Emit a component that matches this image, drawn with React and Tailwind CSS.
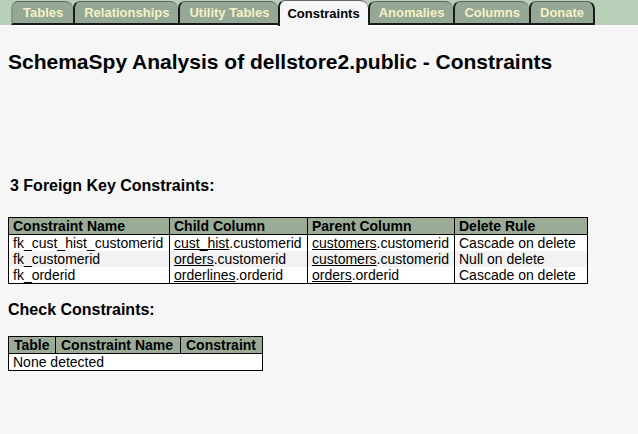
import React from "react";

const tabs = ["Tables", "Relationships", "Utility Tables", "Constraints", "Anomalies", "Columns", "Donate"];

function Tab({ label, active, first, last }) {
  let cls =
    "flex items-center rounded-tl-[7px] rounded-tr-[8px] border-t-[1px] border-t-[#666] border-l-[2px] ";
  cls += first ? "border-l-[#8a9a8a] pl-[10px] pr-[10px] " : "border-l-[#1a1a1a] ";
  if (last) cls += "border-r-[2px] border-r-[#1a1a1a] ";
  if (active) cls += "bg-[#f6f6f6] text-black h-[26px] -mb-[1px] pl-[7px] pr-[8px]";
  else cls += "bg-[#95a895] text-[#f3f1c6] h-[24px] border-b-[2px] border-b-[#1a1a1a]" + (first ? "" : " pl-[9px] pr-[9px]");
  return (
    <div className={cls}>
      <span className="text-[13px] font-bold leading-none">{label}</span>
    </div>
  );
}

const U = ({ children }) => <span className="underline">{children}</span>;

const td = "pl-[4px] pr-[3px] border-x border-black whitespace-nowrap";
const th = "text-left font-bold pl-[4px] pr-[3px] border border-black whitespace-nowrap";

export default function App() {
  return (
    <div
      className="w-[638px] h-[434px] bg-[#f6f6f6] text-black overflow-hidden"
      style={{ fontFamily: '"Liberation Sans", Arial, sans-serif' }}
    >
      <div className="h-[27px] bg-[#b8d0b8] flex items-end pl-[11px] border-b-[2px] border-b-[#fbfbfb]">
        {tabs.map((t, i) => (
          <Tab
            key={t}
            label={t}
            active={t === "Constraints"}
            first={i === 0}
            last={i === tabs.length - 1}
          />
        ))}
      </div>

      <h1 className="mt-[23px] ml-[8px] text-[21px] font-bold leading-[24px]">
        SchemaSpy Analysis of dellstore2.public - Constraints
      </h1>

      <h2 className="mt-[103px] ml-[10px] text-[16px] font-bold leading-[18px]">3 Foreign Key Constraints:</h2>

      <table className="mt-[22px] ml-[8px] border-collapse border border-black text-[14px] leading-[16px]">
        <thead>
          <tr className="bg-[#9bab96]">
            <th className={th + " w-[161px]"}>Constraint Name</th>
            <th className={th + " w-[138px]"}>Child Column</th>
            <th className={th + " w-[147px]"}>Parent Column</th>
            <th className={th + " w-[133px]"}>Delete Rule</th>
          </tr>
        </thead>
        <tbody>
          <tr className="bg-white">
            <td className={td}>fk_cust_hist_customerid</td>
            <td className={td}><U>cust_hist</U>.customerid</td>
            <td className={td}><U>customers</U>.customerid</td>
            <td className={td}>Cascade on delete</td>
          </tr>
          <tr className="bg-[#f2f2f2]">
            <td className={td}>fk_customerid</td>
            <td className={td}><U>orders</U>.customerid</td>
            <td className={td}><U>customers</U>.customerid</td>
            <td className={td}>Null on delete</td>
          </tr>
          <tr className="bg-white">
            <td className={td}>fk_orderid</td>
            <td className={td}><U>orderlines</U>.orderid</td>
            <td className={td}><U>orders</U>.orderid</td>
            <td className={td}>Cascade on delete</td>
          </tr>
        </tbody>
      </table>

      <h2 className="mt-[17px] ml-[8px] text-[16px] font-bold leading-[18px]">Check Constraints:</h2>

      <table className="mt-[17px] ml-[8px] border-collapse border border-black text-[14px] leading-[16px]">
        <thead>
          <tr className="bg-[#9bab96]">
            <th className={th + " w-[47px] pl-[5px]"}>Table</th>
            <th className={th + " w-[125px] pl-[5px]"}>Constraint Name</th>
            <th className={th + " w-[82px] pl-[5px]"}>Constraint</th>
          </tr>
        </thead>
        <tbody>
          <tr className="bg-white">
            <td colSpan={3} className="pl-[4px]">None detected</td>
          </tr>
        </tbody>
      </table>
    </div>
  );
}
